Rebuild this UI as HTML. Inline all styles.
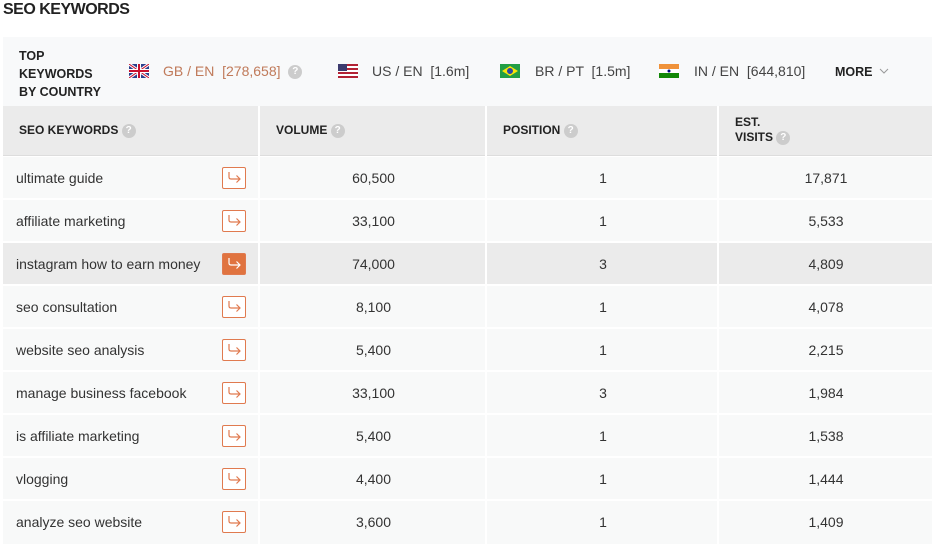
<!DOCTYPE html>
<html><head><style>
*{margin:0;padding:0;box-sizing:border-box}
body{width:932px;height:544px;background:#fff;font-family:"Liberation Sans",sans-serif;color:#333;position:relative;overflow:hidden}
.title{position:absolute;left:3px;top:1px;font-size:16px;font-weight:bold;color:#222;letter-spacing:-0.5px}
.bar{position:absolute;left:3px;top:37px;width:929px;height:69px;background:#f8f9fa}
.bar .t{position:absolute;left:16px;top:10px;font-size:12.5px;font-weight:bold;line-height:18px;color:#222}
.c{position:absolute;top:26px;font-size:14px;color:#444}
.fl{position:absolute;top:27px;width:20px;height:14px}
.q{display:inline-block;width:14px;height:14px;border-radius:50%;background:#ccc;color:#fff;font-size:10px;text-align:center;line-height:14px;font-weight:bold;vertical-align:middle}
.hdr{position:absolute;left:3px;top:106px;width:929px;height:50px;background:#ebebeb;border-bottom:1px solid #ddd}
.hdr div{position:absolute;font-size:12px;font-weight:bold;color:#222}
.vl{position:absolute;top:106px;width:2px;height:438px;background:#fff}
.row{position:absolute;left:3px;width:929px;height:41px;background:#f8f9f9;font-size:14px;color:#333}
.row span{position:absolute;top:13px}
.row .k{left:13px}
.row .v{left:257px;width:227px;text-align:center}
.row .p{left:485px;width:230px;text-align:center}
.row .e{left:717px;width:212px;text-align:center}
.ic{position:absolute;left:219px;top:10px;width:24px;height:22px;border:1px solid #e07a4f;border-radius:2px;background:#fff}
.ic svg{position:absolute;left:0;top:0;width:22px;height:20px}
.ic path{stroke:#e07a4f;fill:none;stroke-width:1.2}
.hl{background:#ebebeb}
.hl .ic{background:#e0733f}
.hl .ic path{stroke:#fff}
</style></head><body>
<div class="title">SEO KEYWORDS</div>
<div class="bar">
<div class="t">TOP<br>KEYWORDS<br>BY COUNTRY</div>
<svg class="fl" style="left:126px" viewBox="0 0 20 14"><rect width="20" height="14" fill="#2b3f8c"/><path d="M0 0L20 14M20 0L0 14" stroke="#fff" stroke-width="3"/><path d="M0 0L20 14M20 0L0 14" stroke="#c8102e" stroke-width="1"/><path d="M10 0V14M0 7H20" stroke="#fff" stroke-width="4"/><path d="M10 0V14M0 7H20" stroke="#c8102e" stroke-width="2"/></svg>
<div class="c" style="left:160px;color:#c07a5a">GB / EN &nbsp;[278,658] &nbsp;<span class="q">?</span></div>
<svg class="fl" style="left:335px" viewBox="0 0 20 14"><rect width="20" height="14" fill="#fff"/><path d="M0 1H20M0 5H20M0 9H20M0 13H20" stroke="#b22234" stroke-width="2"/><rect width="9" height="7" fill="#3c3b6e"/></svg>
<div class="c" style="left:369px">US / EN &nbsp;[1.6m]</div>
<svg class="fl" style="left:497px" viewBox="0 0 20 14"><rect width="20" height="14" fill="#229e45"/><path d="M10 2L18 7L10 12L2 7Z" fill="#f8e509"/><circle cx="10" cy="7" r="3" fill="#2b49a3"/></svg>
<div class="c" style="left:532px">BR / PT &nbsp;[1.5m]</div>
<svg class="fl" style="left:656px" viewBox="0 0 20 14"><rect width="20" height="5" fill="#f0923a"/><rect y="5" width="20" height="4" fill="#fff"/><rect y="9" width="20" height="5" fill="#138808"/><circle cx="10" cy="7" r="1.5" fill="#000080"/></svg>
<div class="c" style="left:691px">IN / EN &nbsp;[644,810]</div>
<div class="c" style="left:832px;font-weight:bold;font-size:12.5px;color:#222;top:28px">MORE &nbsp;<svg width="10" height="8" viewBox="0 0 10 8" style="vertical-align:1px"><path d="M1 2L5 6L9 2" stroke="#999" fill="none"/></svg></div>
</div>
<div class="hdr">
<div style="left:16px;top:17px">SEO KEYWORDS <span class="q">?</span></div>
<div style="left:273px;top:17px">VOLUME <span class="q">?</span></div>
<div style="left:500px;top:17px">POSITION <span class="q">?</span></div>
<div style="left:732px;top:9px;line-height:15px">EST.<br>VISITS <span class="q">?</span></div>
</div>
<div class="row" style="top:157px"><span class="k">ultimate guide</span><div class="ic"><svg viewBox="0 0 22 20"><path d="M6 4V9Q6 11 8 11H17M13.5 7.5L17 11L13.5 14.5"/></svg></div><span class="v">60,500</span><span class="p">1</span><span class="e">17,871</span></div>
<div class="row" style="top:200px"><span class="k">affiliate marketing</span><div class="ic"><svg viewBox="0 0 22 20"><path d="M6 4V9Q6 11 8 11H17M13.5 7.5L17 11L13.5 14.5"/></svg></div><span class="v">33,100</span><span class="p">1</span><span class="e">5,533</span></div>
<div class="row hl" style="top:243px"><span class="k">instagram how to earn money</span><div class="ic"><svg viewBox="0 0 22 20"><path d="M6 4V9Q6 11 8 11H17M13.5 7.5L17 11L13.5 14.5"/></svg></div><span class="v">74,000</span><span class="p">3</span><span class="e">4,809</span></div>
<div class="row" style="top:286px"><span class="k">seo consultation</span><div class="ic"><svg viewBox="0 0 22 20"><path d="M6 4V9Q6 11 8 11H17M13.5 7.5L17 11L13.5 14.5"/></svg></div><span class="v">8,100</span><span class="p">1</span><span class="e">4,078</span></div>
<div class="row" style="top:329px"><span class="k">website seo analysis</span><div class="ic"><svg viewBox="0 0 22 20"><path d="M6 4V9Q6 11 8 11H17M13.5 7.5L17 11L13.5 14.5"/></svg></div><span class="v">5,400</span><span class="p">1</span><span class="e">2,215</span></div>
<div class="row" style="top:372px"><span class="k">manage business facebook</span><div class="ic"><svg viewBox="0 0 22 20"><path d="M6 4V9Q6 11 8 11H17M13.5 7.5L17 11L13.5 14.5"/></svg></div><span class="v">33,100</span><span class="p">3</span><span class="e">1,984</span></div>
<div class="row" style="top:415px"><span class="k">is affiliate marketing</span><div class="ic"><svg viewBox="0 0 22 20"><path d="M6 4V9Q6 11 8 11H17M13.5 7.5L17 11L13.5 14.5"/></svg></div><span class="v">5,400</span><span class="p">1</span><span class="e">1,538</span></div>
<div class="row" style="top:458px"><span class="k">vlogging</span><div class="ic"><svg viewBox="0 0 22 20"><path d="M6 4V9Q6 11 8 11H17M13.5 7.5L17 11L13.5 14.5"/></svg></div><span class="v">4,400</span><span class="p">1</span><span class="e">1,444</span></div>
<div class="row" style="top:501px;height:43px"><span class="k">analyze seo website</span><div class="ic"><svg viewBox="0 0 22 20"><path d="M6 4V9Q6 11 8 11H17M13.5 7.5L17 11L13.5 14.5"/></svg></div><span class="v">3,600</span><span class="p">1</span><span class="e">1,409</span></div>
<div class="vl" style="left:258px"></div>
<div class="vl" style="left:485px"></div>
<div class="vl" style="left:717px"></div>
</body></html>
